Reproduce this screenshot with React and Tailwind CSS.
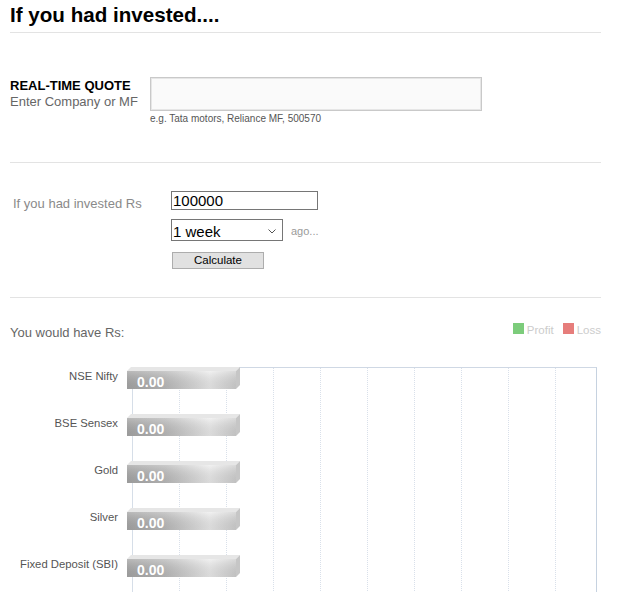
import React from "react";

const rows = ["NSE Nifty", "BSE Sensex", "Gold", "Silver", "Fixed Deposit (SBI)"];
const grid = [46, 93, 140, 187, 234, 281, 328, 375, 422];

function Bar({ id }) {
  return (
    <div className="relative w-[113px] h-[23px] -mt-px -ml-[6px]">
      <svg className="absolute inset-0" width="113" height="23" viewBox="0 0 113 23">
        <defs>
          <linearGradient id={`bf${id}`} x1="0" x2="1" y1="0" y2="0">
            <stop offset="0" stopColor="#a8a8a8" />
            <stop offset="0.35" stopColor="#bdbdbd" />
            <stop offset="0.76" stopColor="#eeeeee" />
            <stop offset="1" stopColor="#d2d2d2" />
          </linearGradient>
          <linearGradient id={`bv${id}`} x1="0" x2="0" y1="0" y2="1">
            <stop offset="0" stopColor="#ffffff" stopOpacity="0.2" />
            <stop offset="1" stopColor="#000000" stopOpacity="0.08" />
          </linearGradient>
        </defs>
        <polygon points="0,4 4,0 113,0 109,4" fill="#e6e6e6" />
        <rect x="0" y="4" width="109" height="18" fill={`url(#bf${id})`} />
        <rect x="0" y="4" width="109" height="18" fill={`url(#bv${id})`} />
        <polygon points="109,4 113,0 113,18 109,22" fill="#c6c6c6" />
      </svg>
      <span className="absolute left-[10px] top-[7px] text-[14px] font-bold leading-[16px] text-white">0.00</span>
    </div>
  );
}

export default function App() {
  return (
    <div className="font-['Liberation_Sans',Arial,sans-serif] bg-white w-[640px] h-[592px] overflow-hidden">
      <div className="ml-[10px] w-[591px]">
        {/* Title */}
        <div className="h-[32px] pt-[3px]">
          <h1 className="text-[20.6px] leading-[24px] font-bold text-black">If you had invested....</h1>
        </div>
        <div className="h-px bg-[#e3e3e3]" />

        {/* Real-time quote */}
        <div className="mt-[44px] flex items-start">
          <div className="w-[140px] pt-px">
            <div className="text-[13px] leading-[16px] font-bold text-black">REAL-TIME QUOTE</div>
            <div className="text-[13px] leading-[16px] text-[#666666]">Enter Company or MF</div>
          </div>
          <div className="flex flex-col">
            <input
              readOnly
              className="w-[332px] h-[34px] border border-[#c9c9c9] bg-[#fafafa] shadow-[inset_0_0_0_1px_#e6e6e6] outline-none"
            />
            <div className="mt-[2px] text-[10px] leading-[12px] text-[#555555]">e.g. Tata motors, Reliance MF, 500570</div>
          </div>
        </div>

        <div className="mt-[37px] h-px bg-[#e3e3e3]" />

        {/* Investment form */}
        <div className="mt-[28px] flex items-start">
          <div className="w-[161px] pl-[3px] pt-[5px] text-[13px] leading-[16px] text-[#8a8a8a]">If you had invested Rs</div>
          <div className="flex flex-col items-start">
            <input
              readOnly
              value="100000"
              className="w-[147px] h-[19px] border border-[#767676] bg-white pl-px text-[15px] leading-[17px] text-black outline-none"
            />
            <div className="mt-[9px] flex items-start">
              <div className="relative w-[112px] h-[22px] border border-[#767676] bg-white">
                <select className="w-full h-[20px] appearance-none bg-transparent pl-px text-[15px] leading-[20px] text-black outline-none">
                  <option>1 week</option>
                </select>
                <svg className="absolute right-[6px] top-[9px] pointer-events-none" width="8" height="5" viewBox="0 0 8 5">
                  <polyline points="0.5,0.5 4,4 7.5,0.5" fill="none" stroke="#555555" strokeWidth="1" />
                </svg>
              </div>
              <span className="ml-[8px] pt-[6px] text-[11px] leading-[13px] text-[#9a9a9a]">ago...</span>
            </div>
            <button className="mt-[11px] ml-px w-[92px] h-[17px] border border-[#adadad] bg-[#e1e1e1] text-[11.5px] leading-[15px] text-black">
              Calculate
            </button>
          </div>
        </div>

        <div className="mt-[28px] h-px bg-[#e3e3e3]" />

        {/* Result header */}
        <div className="mt-[25px] flex items-start justify-between">
          <div className="mt-[3px] text-[13px] leading-[14px] text-[#666666]">You would have Rs:</div>
          <div className="flex items-start">
            <span className="w-[11px] h-[11px] bg-[#7ccc7b]" />
            <span className="ml-[3px] mt-px text-[11.5px] leading-[13px] text-[#cccccc]">Profit</span>
            <span className="ml-[9px] w-[11px] h-[11px] bg-[#e67d7b]" />
            <span className="ml-[3px] mt-px text-[11.5px] leading-[13px] text-[#cccccc]">Loss</span>
          </div>
        </div>
      </div>

      {/* Chart */}
      <div className="mt-[27px] ml-[10px] flex items-start">
        <div className="w-[122px] pr-[14px] flex flex-col">
          {rows.map((r) => (
            <div key={r} className="h-[47px] pt-[3px] text-right text-[11.3px] leading-[13px] text-[#555555] whitespace-nowrap">
              {r}
            </div>
          ))}
        </div>
        <div className="relative w-[465px] h-[260px] border-t border-l border-r border-t-[#cfd8e4] border-l-[#d6dee8] border-r-[#c6d2e0]">
          <svg className="absolute inset-0" width="463" height="259">
            {grid.map((x) => (
              <line key={x} x1={x + 0.5} x2={x + 0.5} y1="0" y2="259" stroke="#d9e0ea" strokeWidth="1" strokeDasharray="1 1" />
            ))}
          </svg>
          <div className="flex flex-col">
            {rows.map((r, i) => (
              <div key={r} className="h-[47px]">
                <Bar id={i} />
              </div>
            ))}
          </div>
        </div>
      </div>
    </div>
  );
}
